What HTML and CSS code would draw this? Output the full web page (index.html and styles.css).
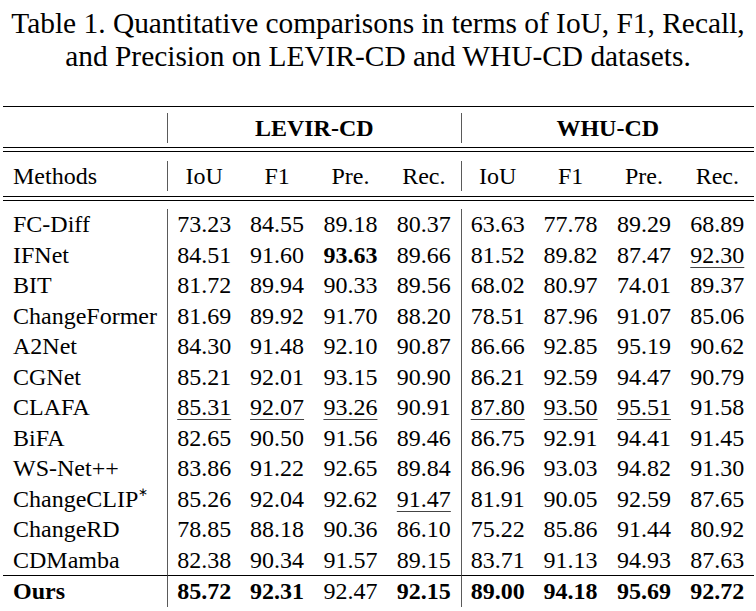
FILE: index.html
```html
<!DOCTYPE html>
<html>
<head>
<meta charset="utf-8">
<link rel="stylesheet" href="styles.css">
</head>
<body>
<div class="page">
  <p class="caption">Table 1. Quantitative comparisons in terms of IoU, F1, Recall,<br>and Precision on LEVIR-CD and WHU-CD datasets.</p>
  <table class="results">
    <colgroup>
      <col class="c-method">
      <col class="c-num"><col class="c-num"><col class="c-num"><col class="c-num">
      <col class="c-num"><col class="c-num"><col class="c-num"><col class="c-num">
    </colgroup>
    <tr class="gap g-top"><td colspan="9"></td></tr>
    <tr class="group">
      <td></td>
      <td colspan="4" class="div">LEVIR-CD</td>
      <td colspan="4" class="div">WHU-CD</td>
    </tr>
    <tr class="gap g-a"><td colspan="9"></td></tr>
    <tr class="double"><td colspan="9"></td></tr>
    <tr class="gap g-b"><td colspan="9"></td></tr>
    <tr class="head">
      <td class="m">Methods</td>
      <td class="div">IoU</td><td>F1</td><td>Pre.</td><td>Rec.</td>
      <td class="div">IoU</td><td>F1</td><td>Pre.</td><td>Rec.</td>
    </tr>
    <tr class="gap g-c"><td colspan="9"></td></tr>
    <tr class="double"><td colspan="9"></td></tr>
    <tr class="gap g-d"><td colspan="9"></td></tr>
    <tr class="row"><td class="m">FC-Diff</td><td class="div">73.23</td><td>84.55</td><td>89.18</td><td>80.37</td><td class="div">63.63</td><td>77.78</td><td>89.29</td><td>68.89</td></tr>
    <tr class="row"><td class="m">IFNet</td><td class="div">84.51</td><td>91.60</td><td><b>93.63</b></td><td>89.66</td><td class="div">81.52</td><td>89.82</td><td>87.47</td><td><span class="u">92.30</span></td></tr>
    <tr class="row"><td class="m">BIT</td><td class="div">81.72</td><td>89.94</td><td>90.33</td><td>89.56</td><td class="div">68.02</td><td>80.97</td><td>74.01</td><td>89.37</td></tr>
    <tr class="row"><td class="m">ChangeFormer</td><td class="div">81.69</td><td>89.92</td><td>91.70</td><td>88.20</td><td class="div">78.51</td><td>87.96</td><td>91.07</td><td>85.06</td></tr>
    <tr class="row"><td class="m">A2Net</td><td class="div">84.30</td><td>91.48</td><td>92.10</td><td>90.87</td><td class="div">86.66</td><td>92.85</td><td>95.19</td><td>90.62</td></tr>
    <tr class="row"><td class="m">CGNet</td><td class="div">85.21</td><td>92.01</td><td>93.15</td><td>90.90</td><td class="div">86.21</td><td>92.59</td><td>94.47</td><td>90.79</td></tr>
    <tr class="row"><td class="m">CLAFA</td><td class="div"><span class="u">85.31</span></td><td><span class="u">92.07</span></td><td><span class="u">93.26</span></td><td>90.91</td><td class="div"><span class="u">87.80</span></td><td><span class="u">93.50</span></td><td><span class="u">95.51</span></td><td>91.58</td></tr>
    <tr class="row"><td class="m">BiFA</td><td class="div">82.65</td><td>90.50</td><td>91.56</td><td>89.46</td><td class="div">86.75</td><td>92.91</td><td>94.41</td><td>91.45</td></tr>
    <tr class="row"><td class="m">WS-Net++</td><td class="div">83.86</td><td>91.22</td><td>92.65</td><td>89.84</td><td class="div">86.96</td><td>93.03</td><td>94.82</td><td>91.30</td></tr>
    <tr class="row"><td class="m">ChangeCLIP<sup class="ast">∗</sup></td><td class="div">85.26</td><td>92.04</td><td>92.62</td><td><span class="u">91.47</span></td><td class="div">81.91</td><td>90.05</td><td>92.59</td><td>87.65</td></tr>
    <tr class="row"><td class="m">ChangeRD</td><td class="div">78.85</td><td>88.18</td><td>90.36</td><td>86.10</td><td class="div">75.22</td><td>85.86</td><td>91.44</td><td>80.92</td></tr>
    <tr class="row"><td class="m">CDMamba</td><td class="div">82.38</td><td>90.34</td><td>91.57</td><td>89.15</td><td class="div">83.71</td><td>91.13</td><td>94.93</td><td>87.63</td></tr>
    <tr class="row ours"><td class="m"><b>Ours</b></td><td class="div"><b>85.72</b></td><td><b>92.31</b></td><td>92.47</td><td><b>92.15</b></td><td class="div"><b>89.00</b></td><td><b>94.18</b></td><td><b>95.69</b></td><td><b>92.72</b></td></tr>
  </table>
</div>
</body>
</html>
```

FILE: styles.css
```css
html, body {
  margin: 0;
  padding: 0;
  background: #ffffff;
}

.page {
  width: 756px;
  font-family: "Liberation Serif", "Times New Roman", serif;
  color: #000;
}

.caption {
  margin: 0;
  padding-top: 7px;
  font-size: 29.4px;
  line-height: 33px;
  text-align: center;
}

.results {
  margin: 33px 0 0 3px;
  width: 751px;
  table-layout: fixed;
  border-collapse: separate;
  border-spacing: 0;
  border-top: 1.5px solid #000;
  font-size: 24px;
}

.c-method { width: 164px; }
.c-num { width: 73.375px; }

.results td {
  padding: 0;
  text-align: center;
  white-space: nowrap;
}

.results td.m {
  text-align: left;
  padding-left: 10px;
}

.results td.div {
  border-left: 1px solid #5a5a5a;
}

.gap td {
  font-size: 0;
  line-height: 0;
}

.g-top td { height: 5.5px; }
.g-a td { height: 4.5px; }
.g-b td { height: 9px; }
.g-c td { height: 5.5px; }
.g-d td { height: 8.5px; }

.double td {
  height: 2.6px;
  border-top: 1.2px solid #000;
  border-bottom: 1.2px solid #000;
  font-size: 0;
  line-height: 0;
}

.group td,
.head td {
  height: 30px;
  line-height: 30px;
}

.group td {
  font-weight: bold;
}

.row td {
  height: 30.5px;
  line-height: 30.5px;
}

.ours td {
  border-top: 1.3px solid #000;
}

.u {
  text-decoration: underline;
  text-decoration-thickness: 1px;
  text-underline-offset: 4px;
  text-decoration-color: #444;
}

.ast {
  font-size: 12px;
  line-height: 0;
  vertical-align: 11px;
}
```
